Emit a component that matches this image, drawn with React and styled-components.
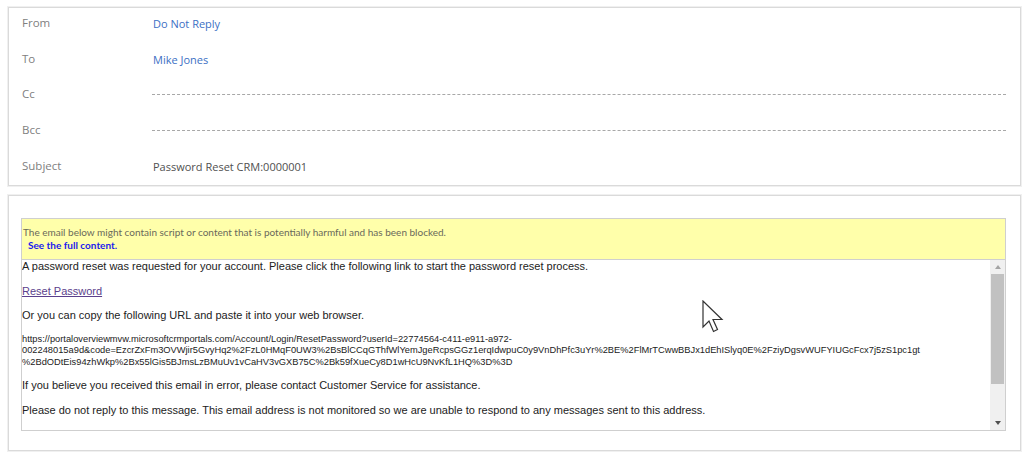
import React from "react";
import styled, { createGlobalStyle } from "styled-components";

const GlobalStyle = createGlobalStyle`
  html, body {
    margin: 0;
    padding: 0;
    background: #ffffff;
  }
  body {
    font-family: "Open Sans", "Noto Sans", sans-serif;
  }
`;

const headerFields = [
  { label: "From", value: "Do Not Reply", kind: "link" },
  { label: "To", value: "Mike Jones", kind: "link" },
  { label: "Cc", kind: "empty" },
  { label: "Bcc", kind: "empty" },
  { label: "Subject", value: "Password Reset CRM:0000001", kind: "text" },
];

const urlLines = [
  "https://portaloverviewmvw.microsoftcrmportals.com/Account/Login/ResetPassword?userId=22774564-c411-e911-a972-",
  "002248015a9d&code=EzcrZxFm3OVWjir5GvyHq2%2FzL0HMqF0UW3%2BsBlCCqGThfWlYemJgeRcpsGGz1erqIdwpuC0y9VnDhPfc3uYr%2BE%2FlMrTCwwBBJx1dEhISlyq0E%2FziyDgsvWUFYIUGcFcx7j5zS1pc1gt",
  "%2BdODtEis94zhWkp%2Bx55lGis5BJmsLzBMuUv1vCaHV3vGXB75C%2Bk59fXueCy8D1wHcU9NvKfL1HQ%3D%3D",
];

const App = () => {
  return (
    <>
      <GlobalStyle />
      <Page>
        <HeaderCard>
          {headerFields.map((f) => (
            <FieldRow key={f.label}>
              <Label>{f.label}</Label>
              {f.kind === "empty" ? (
                <EmptyValue />
              ) : (
                <Value $link={f.kind === "link"}>{f.value}</Value>
              )}
            </FieldRow>
          ))}
        </HeaderCard>

        <BodyCard>
          <Banner>
            <BannerText>
              The email below might contain script or content that is potentially harmful and has been blocked.
            </BannerText>
            <BannerLink>See the full content.</BannerLink>
          </Banner>
          <Frame>
            <Content>
              <Para>
                A password reset was requested for your account. Please click the following link to start the password reset process.
              </Para>
              <Para>
                <MailLink>Reset Password</MailLink>
              </Para>
              <Para>Or you can copy the following URL and paste it into your web browser.</Para>
              <Url>
                {urlLines.map((l) => (
                  <span key={l}>{l}</span>
                ))}
              </Url>
              <Para>If you believe you received this email in error, please contact Customer Service for assistance.</Para>
              <Para>
                Please do not reply to this message. This email address is not monitored so we are unable to respond to any messages sent to this address.
              </Para>
            </Content>
            <Scrollbar>
              <Arrow $dir="up" />
              <Track>
                <Thumb />
              </Track>
              <Arrow $dir="down" />
            </Scrollbar>
            <Cursor viewBox="0 0 22 34" width="22" height="34">
              <path
                d="M1 1 L1 27 L7 21 L11.5 31.5 L15.5 29.5 L11 19.5 L20 19.5 Z"
                fill="#ffffff"
                stroke="#333333"
                strokeWidth="1.2"
                strokeLinejoin="miter"
              />
            </Cursor>
          </Frame>
        </BodyCard>
      </Page>
    </>
  );
};

export default App;

/* CSS */
const Page = styled.div`
  padding: 7px 3px 8px 8px;
  display: flex;
  flex-direction: column;
  gap: 9px;
`;

const Card = styled.section`
  box-sizing: border-box;
  border: 1px solid #dadada;
  box-shadow: 0 0 0 1px #f0f0f0;
  background: #ffffff;
`;

const HeaderCard = styled(Card)`
  height: 179px;
  padding: 1px 14px 0 13px;
  display: grid;
  grid-auto-rows: 35.7px;
`;

const FieldRow = styled.div`
  display: grid;
  grid-template-columns: 131px 1fr;
  align-items: start;
`;

const Label = styled.div`
  padding-top: 6px;
  font-size: 11.5px;
  line-height: 16px;
  color: #808080;
`;

const Value = styled.div`
  padding-top: 7px;
  font-size: 11px;
  line-height: 16px;
  color: ${(p) => (p.$link ? "#3c6fc4" : "#505050")};
`;

const EmptyValue = styled.div`
  height: 14px;
  margin-left: -1px;
  border-bottom: 1px dashed #a8a8a8;
`;

const BodyCard = styled(Card)`
  height: 256px;
  padding: 22px 14px 19px 12px;
  display: flex;
  flex-direction: column;
`;

const Banner = styled.div`
  box-sizing: border-box;
  height: 42px;
  padding: 7px 1px 0;
  background: #ffffaa;
  border: 1px solid #cfcfcf;
  font-family: Lato, "Liberation Sans", sans-serif;
`;

const BannerText = styled.div`
  font-size: 10px;
  line-height: 13px;
  color: #6a6a5a;
`;

const BannerLink = styled.div`
  padding-left: 5px;
  font-size: 10px;
  line-height: 13px;
  font-weight: bold;
  color: #1a1aee;
`;

const Frame = styled.div`
  position: relative;
  flex: 1;
  display: flex;
  min-height: 0;
  border: 1px solid #cfcfcf;
  border-top: none;
  background: #ffffff;
`;

const Content = styled.div`
  flex: 1;
  overflow: hidden;
  font-family: "Liberation Sans", Arial, sans-serif;
  font-size: 11px;
  color: #222222;
`;

const Para = styled.p`
  margin: 0 0 11px;
  line-height: 13.5px;
  white-space: nowrap;
`;

const MailLink = styled.span`
  color: #5b3f8c;
  text-decoration: underline;
`;

const Url = styled.div`
  margin: 0 0 11px;
  font-size: 9.3px;
  line-height: 11.5px;
  span {
    display: block;
    white-space: nowrap;
  }
`;

const Scrollbar = styled.div`
  width: 15px;
  display: flex;
  flex-direction: column;
  background: #f0f0f0;
`;

const Arrow = styled.div`
  height: 14px;
  display: flex;
  align-items: center;
  justify-content: center;
  &::before {
    content: "";
    border-left: 3.5px solid transparent;
    border-right: 3.5px solid transparent;
    ${(p) =>
      p.$dir === "up"
        ? "border-bottom: 4px solid #a3a3a3;"
        : "border-top: 4px solid #505050;"}
  }
`;

const Track = styled.div`
  flex: 1;
  padding: 0 1px;
`;

const Thumb = styled.div`
  height: 110px;
  background: #c1c1c1;
`;

const Cursor = styled.svg`
  position: absolute;
  left: 680px;
  top: 40px;
`;
